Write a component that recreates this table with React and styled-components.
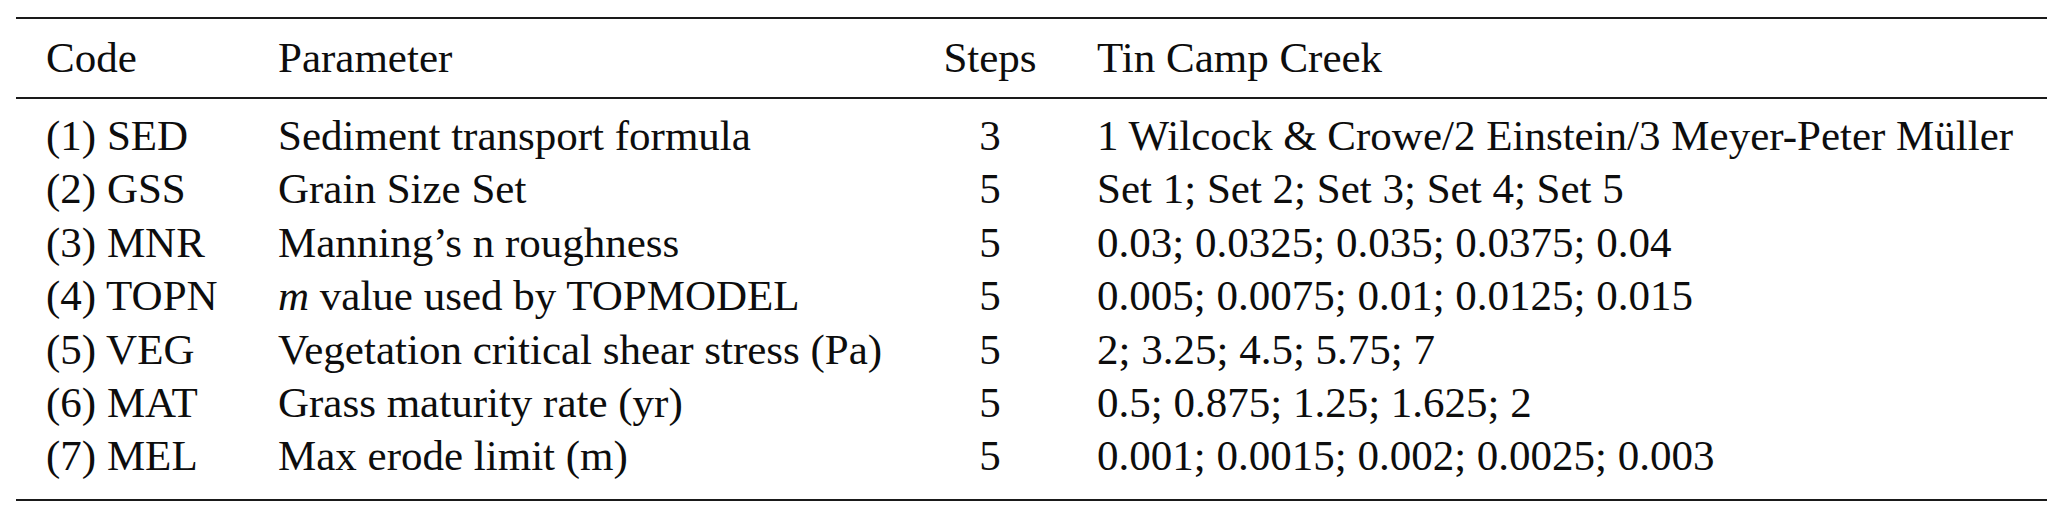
import React from "react";
import styled, { createGlobalStyle } from "styled-components";

const Global = createGlobalStyle`
  html, body { margin: 0; padding: 0; background: #ffffff; }
  body { font-family: "Liberation Serif", "Times New Roman", serif; color: #0d0d0d; }
`;

const Page = styled.div`
  padding: 17px 20px 0 16px;
  width: 100%;
  box-sizing: border-box;
`;

const Table = styled.table`
  width: 100%;
  border-collapse: collapse;
  table-layout: fixed;
  font-size: 43px;
  border-top: 2px solid #1a1a1a;
  border-bottom: 2px solid #1a1a1a;
`;

const HeadRow = styled.tr`
  border-bottom: 2px solid #1a1a1a;
`;

const Cell = styled.td`
  padding: 0;
  padding-left: ${(p) => p.$pl || 0}px;
  text-align: ${(p) => (p.$center ? "center" : "left")};
  line-height: 53.4px;
  white-space: nowrap;
  vertical-align: middle;
`;

const HeadCell = styled(Cell).attrs({ as: "th" })`
  font-weight: normal;
  height: 78px;
  line-height: 78px;
  padding-top: 0;
`;

const BodyRow = styled.tr`
  & > td { padding-top: ${(p) => (p.$first ? 10 : 0)}px; padding-bottom: ${(p) => (p.$last ? 16 : 0)}px; }
`;

const Em = styled.i`
  font-style: italic;
`;

const rows = [
  ["(1) SED", "Sediment transport formula", "3", "1 Wilcock & Crowe/2 Einstein/3 Meyer-Peter Müller"],
  ["(2) GSS", "Grain Size Set", "5", "Set 1; Set 2; Set 3; Set 4; Set 5"],
  ["(3) MNR", "Manning’s n roughness", "5", "0.03; 0.0325; 0.035; 0.0375; 0.04"],
  ["(4) TOPN", <><Em>m</Em> value used by TOPMODEL</>, "5", "0.005; 0.0075; 0.01; 0.0125; 0.015"],
  ["(5) VEG", "Vegetation critical shear stress (Pa)", "5", "2; 3.25; 4.5; 5.75; 7"],
  ["(6) MAT", "Grass maturity rate (yr)", "5", "0.5; 0.875; 1.25; 1.625; 2"],
  ["(7) MEL", "Max erode limit (m)", "5", "0.001; 0.0015; 0.002; 0.0025; 0.003"],
];

export default function App() {
  return (
    <Page>
      <Global />
      <Table>
        <colgroup>
          <col style={{ width: 262 }} />
          <col style={{ width: 662 }} />
          <col style={{ width: 100 }} />
          <col />
        </colgroup>
        <thead>
          <HeadRow>
            <HeadCell $pl={30}>Code</HeadCell>
            <HeadCell>Parameter</HeadCell>
            <HeadCell $center>Steps</HeadCell>
            <HeadCell $pl={57}>Tin Camp Creek</HeadCell>
          </HeadRow>
        </thead>
        <tbody>
          {rows.map((r, i) => (
            <BodyRow key={i} $first={i === 0} $last={i === rows.length - 1}>
              <Cell $pl={30}>{r[0]}</Cell>
              <Cell>{r[1]}</Cell>
              <Cell $center>{r[2]}</Cell>
              <Cell $pl={57}>{r[3]}</Cell>
            </BodyRow>
          ))}
        </tbody>
      </Table>
    </Page>
  );
}
